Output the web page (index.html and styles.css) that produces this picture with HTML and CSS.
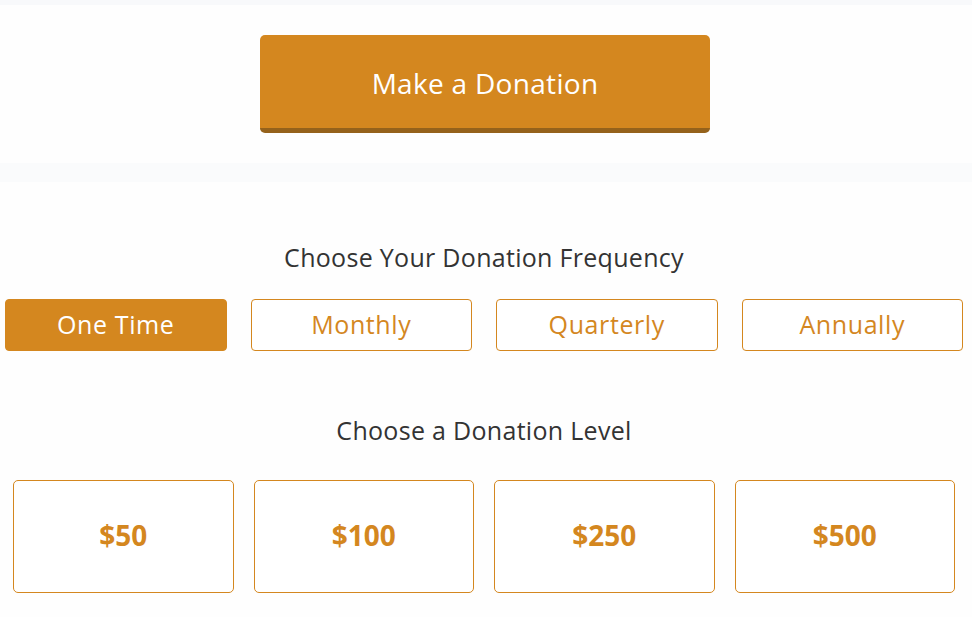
FILE: index.html
```html
<!DOCTYPE html>
<html lang="en">
<head>
    <meta charset="UTF-8">
    <meta name="viewport" content="width=device-width, initial-scale=1.0">
    <title>Donate</title>
    <link rel="stylesheet" href="styles.css">
</head>
<body>
    <div class="top-strip"></div>

    <div class="hero">
        <button class="donate-button">Make a Donation</button>
    </div>

    <div class="divider-band"></div>

    <div class="donation-form">
        <h2 class="section-title">Choose Your Donation Frequency</h2>
        <div class="frequency-row">
            <button class="frequency-option active">One Time</button>
            <button class="frequency-option">Monthly</button>
            <button class="frequency-option">Quarterly</button>
            <button class="frequency-option">Annually</button>
        </div>

        <h2 class="section-title level-title">Choose a Donation Level</h2>
        <div class="level-row">
            <button class="level-option">$50</button>
            <button class="level-option">$100</button>
            <button class="level-option">$250</button>
            <button class="level-option">$500</button>
        </div>
    </div>
</body>
</html>
```

FILE: styles.css
```css
* {
    margin: 0;
    padding: 0;
    box-sizing: border-box;
    font-family: "Open Sans", "Lato", sans-serif;
    font-variant-ligatures: none;
}

body {
    background-color: #fefefe;
    color: #333;
    overflow: hidden;
}

.top-strip {
    height: 5px;
    background-color: #f8f9fb;
}

.hero {
    display: flex;
    justify-content: center;
    padding: 30px 2px 30px 0;
}

.donate-button {
    width: 450px;
    height: 98px;
    padding-top: 2px;
    background-color: #d4871f;
    color: white;
    border: none;
    border-bottom: 5px solid #95621b;
    border-radius: 5px;
    font-size: 28px;
    letter-spacing: 0.3px;
    cursor: pointer;
}

.divider-band {
    height: 19px;
    background-color: #fafbfc;
}

.donation-form {
    width: 958px;
    margin-left: 5px;
    padding-top: 58px;
}

.section-title {
    text-align: center;
    font-weight: normal;
    font-size: 25px;
    letter-spacing: 0.3px;
    line-height: 34px;
    color: #333;
    margin-bottom: 25px;
}

.frequency-row {
    display: flex;
    gap: 24px;
}

.frequency-option {
    flex: 1;
    height: 52px;
    padding-bottom: 2px;
    background-color: white;
    border: 1px solid #d4871f;
    border-radius: 4px;
    color: #d4871f;
    font-size: 25px;
    letter-spacing: 0.6px;
    cursor: pointer;
}

.frequency-option.active {
    background-color: #d4871f;
    color: white;
}

.level-title {
    margin-top: 62px;
    margin-bottom: 33px;
}

.level-row {
    display: flex;
    gap: 20px;
    padding: 0 8px;
}

.level-option {
    flex: 1;
    height: 113px;
    padding-bottom: 4px;
    background-color: white;
    border: 1px solid #d4871f;
    border-radius: 5px;
    color: #d4871f;
    font-size: 28px;
    font-weight: bold;
    cursor: pointer;
}
```
